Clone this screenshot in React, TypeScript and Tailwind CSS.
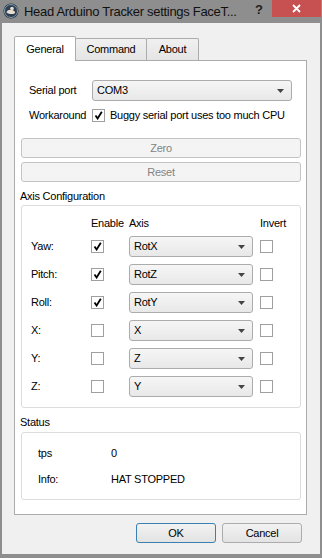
import React from 'react'

type CheckProps = { checked?: boolean }

const Check: React.FC<CheckProps> = ({ checked = false }) => (
  <div className="w-[13px] h-[13px] shrink-0 border border-[#9f9f9f] bg-white flex items-center justify-center">
    {checked && (
      <svg width="9" height="9" viewBox="0 0 9 9">
        <path d="M1.5 4.5 L3.6 7.5 L7.8 0.8" fill="none" stroke="#000" strokeWidth="1.8" />
      </svg>
    )}
  </div>
)

type ComboProps = { value: string; className?: string }

const Combo: React.FC<ComboProps> = ({ value, className = '' }) => (
  <div
    className={`h-[21px] shrink-0 border border-[#acacac] rounded-[3px] bg-gradient-to-b from-[#f6f6f6] to-[#e8e8e8] flex items-center pl-[4px] pr-[7px] ${className}`}
  >
    <span className="flex-1 leading-none">{value}</span>
    <svg width="7" height="4" viewBox="0 0 7 4">
      <path d="M0 0 H7 L3.5 4 Z" fill="#444" />
    </svg>
  </div>
)

const axisRows = [
  { label: 'Yaw:', enabled: true, axis: 'RotX' },
  { label: 'Pitch:', enabled: true, axis: 'RotZ' },
  { label: 'Roll:', enabled: true, axis: 'RotY' },
  { label: 'X:', enabled: false, axis: 'X' },
  { label: 'Y:', enabled: false, axis: 'Z' },
  { label: 'Z:', enabled: false, axis: 'Y' },
]

export default function App() {
  return (
    <div className="w-[322px] h-[558px] bg-[#8e8e8e] flex flex-col font-['Liberation_Sans',Arial,sans-serif] text-[11px] tracking-[-0.25px] text-black overflow-hidden">
      {/* Title bar */}
      <div className="h-[23px] shrink-0 flex items-start">
        <svg className="ml-[3px] mt-[3px] shrink-0" width="16" height="16" viewBox="0 0 16 16">
          <circle cx="8" cy="8" r="7.5" fill="#1f2a36" />
          <circle cx="8" cy="8" r="6.5" fill="#2c3e52" stroke="#9fb6cc" strokeWidth="0.8" />
          <path d="M3.5 9.5 C4 7 7 6.5 9 7 C11 7.5 12.5 8.5 12 10 C11 11.5 6 11.5 3.5 9.5 Z" fill="#e9ddd0" />
          <circle cx="9" cy="5.5" r="1.8" fill="#e9ddd0" />
        </svg>
        <div className="ml-[5px] mt-[4px] w-[228px] text-[13px] tracking-[-0.3px] leading-[15px] text-[#111] whitespace-nowrap overflow-hidden">
          Head Arduino Tracker settings FaceT...
        </div>
        <div className="ml-[3px] mt-[2px] w-[10px] text-[13px] font-bold leading-[15px] text-[#222]">?</div>
        <div className="ml-[7px] w-[49px] h-[17px] bg-[#c75050] flex items-center justify-center">
          <svg width="9" height="9" viewBox="0 0 9 9">
            <path d="M1 1 L8 8 M8 1 L1 8" stroke="#fff" strokeWidth="1.8" />
          </svg>
        </div>
      </div>

      {/* Dialog body */}
      <div className="flex-1 mx-[2px] mb-[4px] bg-[#f0f0f0] flex flex-col pt-[13px] pl-[12px] pr-[13px]">
        {/* Tabs */}
        <div className="h-[24px] shrink-0 flex items-end">
          <div className="relative z-10 -mb-px w-[62px] h-[25px] bg-white border border-b-0 border-[#acacac] rounded-t-[2px] flex items-center justify-center">
            General
          </div>
          <div className="-ml-px w-[72px] h-[22px] bg-gradient-to-b from-[#f0f0f0] to-[#e5e5e5] border border-b-0 border-[#acacac] rounded-t-[2px] flex items-center justify-center">
            Command
          </div>
          <div className="-ml-px w-[53px] h-[22px] bg-gradient-to-b from-[#f0f0f0] to-[#e5e5e5] border border-b-0 border-[#acacac] rounded-t-[2px] flex items-center justify-center">
            About
          </div>
        </div>

        {/* Tab pane */}
        <div className="flex-1 bg-white border border-[#acacac] flex flex-col">
          {/* Serial port */}
          <div className="mt-[19px] h-[21px] flex items-center pl-[14px]">
            <span className="w-[63px]">Serial port</span>
            <Combo value="COM3" className="w-[200px]" />
          </div>

          {/* Workaround */}
          <div className="mt-[6px] h-[16px] flex items-center pl-[14px]">
            <span className="w-[63px]">Workaround</span>
            <Check checked />
            <span className="ml-[5px]">Buggy serial port uses too much CPU</span>
          </div>

          {/* Zero / Reset */}
          <div className="mt-[15px] ml-[6px] w-[280px] h-[20px] border border-[#c4c4c4] rounded-[3px] bg-[#f4f4f4] text-[#838383] flex items-center justify-center">
            Zero
          </div>
          <div className="mt-[4px] ml-[6px] w-[280px] h-[20px] border border-[#c4c4c4] rounded-[3px] bg-[#f4f4f4] text-[#838383] flex items-center justify-center">
            Reset
          </div>

          {/* Axis configuration */}
          <div className="mt-[5px] h-[18px] pl-[5px] leading-[18px]">Axis Configuration</div>
          <div className="ml-[6px] w-[280px] border border-[#dcdcdc] rounded-[3px] pt-[9px] pb-[10px] pl-[9px] flex flex-col gap-[7px]">
            <div className="h-[16px] -mb-[2px] flex items-center">
              <span className="w-[60px]" />
              <span className="w-[38px]">Enable</span>
              <span className="w-[124px]">Axis</span>
              <span className="ml-[7px]">Invert</span>
            </div>
            {axisRows.map((row) => (
              <div key={row.label} className="h-[21px] flex items-center">
                <span className="w-[60px]">{row.label}</span>
                <div className="w-[38px]">
                  <Check checked={row.enabled} />
                </div>
                <Combo value={row.axis} className="w-[124px]" />
                <div className="ml-[7px]">
                  <Check />
                </div>
              </div>
            ))}
          </div>

          {/* Status */}
          <div className="mt-[5px] h-[18px] pl-[5px] leading-[18px]">Status</div>
          <div className="mt-[1px] ml-[6px] w-[280px] border border-[#dcdcdc] rounded-[3px] pt-[12px] pb-[12px] pl-[16px] flex flex-col gap-[10px]">
            <div className="h-[16px] flex items-center">
              <span className="w-[73px]">tps</span>
              <span>0</span>
            </div>
            <div className="h-[16px] flex items-center">
              <span className="w-[73px]">Info:</span>
              <span>HAT STOPPED</span>
            </div>
          </div>
        </div>

        {/* Dialog buttons */}
        <div className="mt-[8px] mb-[11px] h-[20px] shrink-0 flex justify-end gap-[6px] pr-[5px]">
          <div className="w-[80px] h-[20px] border border-[#3c7fb1] rounded-[3px] bg-gradient-to-b from-[#f2f2f2] to-[#e3e3e3] flex items-center justify-center">
            OK
          </div>
          <div className="w-[80px] h-[20px] border border-[#acacac] rounded-[3px] bg-gradient-to-b from-[#f2f2f2] to-[#e3e3e3] flex items-center justify-center">
            Cancel
          </div>
        </div>
      </div>
    </div>
  )
}
